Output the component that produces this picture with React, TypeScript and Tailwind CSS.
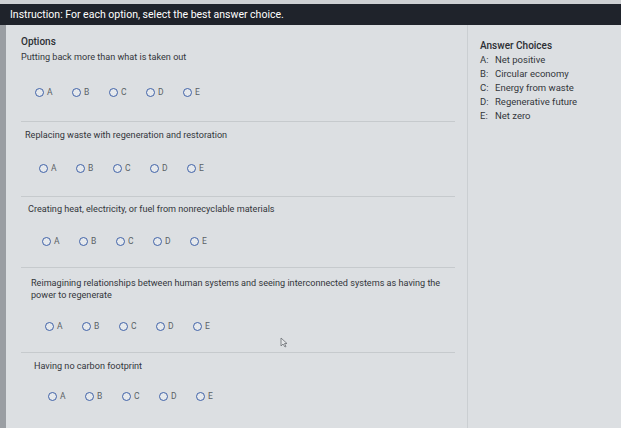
import React from "react";

type Question = {
  text: string[];
  indent: string;
  radioGap: string;
  sepGap: string;
  textGap: string;
};

const questions: Question[] = [
  { text: ["Putting back more than what is taken out"], indent: "ml-0", radioGap: "mt-[23px]", sepGap: "", textGap: "" },
  { text: ["Replacing waste with regeneration and restoration"], indent: "ml-[4px]", radioGap: "mt-[21px]", sepGap: "mt-[23px]", textGap: "mb-[7px]" },
  { text: ["Creating heat, electricity, or fuel from nonrecyclable materials"], indent: "ml-[7px]", radioGap: "mt-[20px]", sepGap: "mt-[22px]", textGap: "mb-[6px]" },
  {
    text: [
      "Reimagining relationships between human systems and seeing interconnected systems as having the",
      "power to regenerate",
    ],
    indent: "ml-[10px]",
    radioGap: "mt-[19px]",
    sepGap: "mt-[20px]",
    textGap: "mb-[9px]",
  },
  { text: ["Having no carbon footprint"], indent: "ml-[13px]", radioGap: "mt-[18px]", sepGap: "mt-[20px]", textGap: "mb-[7px]" },
];

const choices = [
  ["A:", "Net positive"],
  ["B:", "Circular economy"],
  ["C:", "Energy from waste"],
  ["D:", "Regenerative future"],
  ["E:", "Net zero"],
];

function RadioRow({ className }: { className: string }) {
  return (
    <div className={`flex items-center h-[12px] ml-[14px] ${className}`}>
      {["A", "B", "C", "D", "E"].map((l) => (
        <label key={l} className="flex items-center w-[37px] gap-[3px]">
          <span className="block w-[9px] h-[9px] rounded-full border-[1.5px] border-[#4062a8] bg-[#e6e9ec]" />
          <span className="text-[8.5px] leading-none text-[#5a5f65]">{l}</span>
        </label>
      ))}
    </div>
  );
}

export default function App() {
  return (
    <div className="relative w-[621px] h-[428px] overflow-hidden bg-[#dcdfe2] font-['Roboto',_'Liberation_Sans',_sans-serif] text-[#2f3237]">
      <div className="h-[4px] bg-[#cdd0d3]" />
      <div className="h-[21px] bg-[#1f232b] flex items-center pl-[10px] text-[10.5px] text-white">
        Instruction: For each option, select the best answer choice.
      </div>

      <div className="flex h-[403px]">
        <div className="w-[6px] bg-[#9a9ea3]" />

        <div className="w-[462px] border-r border-[#cbcfd2] pl-[15px] pr-[12px] pt-[10px]">
          <div className="text-[10px] leading-[13px] font-medium text-[#2b2e33]">Options</div>

          {questions.map((q, i) => (
            <div key={i}>
              {i > 0 && <div className={`border-t border-[#c6cacd] ${q.sepGap} ${q.textGap}`} />}
              <div className={`${q.indent} mt-[3px] text-[9.1px] leading-[12px] text-[#33363b]`}>
                {q.text.map((t) => (
                  <div key={t} className="whitespace-nowrap">
                    {t}
                  </div>
                ))}
                <RadioRow className={q.radioGap} />
              </div>
            </div>
          ))}
        </div>

        <div className="flex-1 pl-[12px] pt-[14px]">
          <div className="text-[10px] leading-[14px] font-medium text-[#2b2e33]">Answer Choices</div>
          {choices.map(([k, v]) => (
            <div key={k} className="flex text-[9.5px] leading-[14px] text-[#33363b]">
              <span className="w-[15px]">{k}</span>
              <span>{v}</span>
            </div>
          ))}
        </div>
      </div>

      <svg className="absolute left-[280px] top-[337px]" width="8" height="11" viewBox="0 0 8 11">
        <path
          d="M1 1 L1 9 L3 7 L5 10 L6 9.5 L4.5 6.5 L7 6.5 Z"
          fill="#e4e6e8"
          stroke="#6b6f74"
          strokeWidth="0.8"
        />
      </svg>
    </div>
  );
}
